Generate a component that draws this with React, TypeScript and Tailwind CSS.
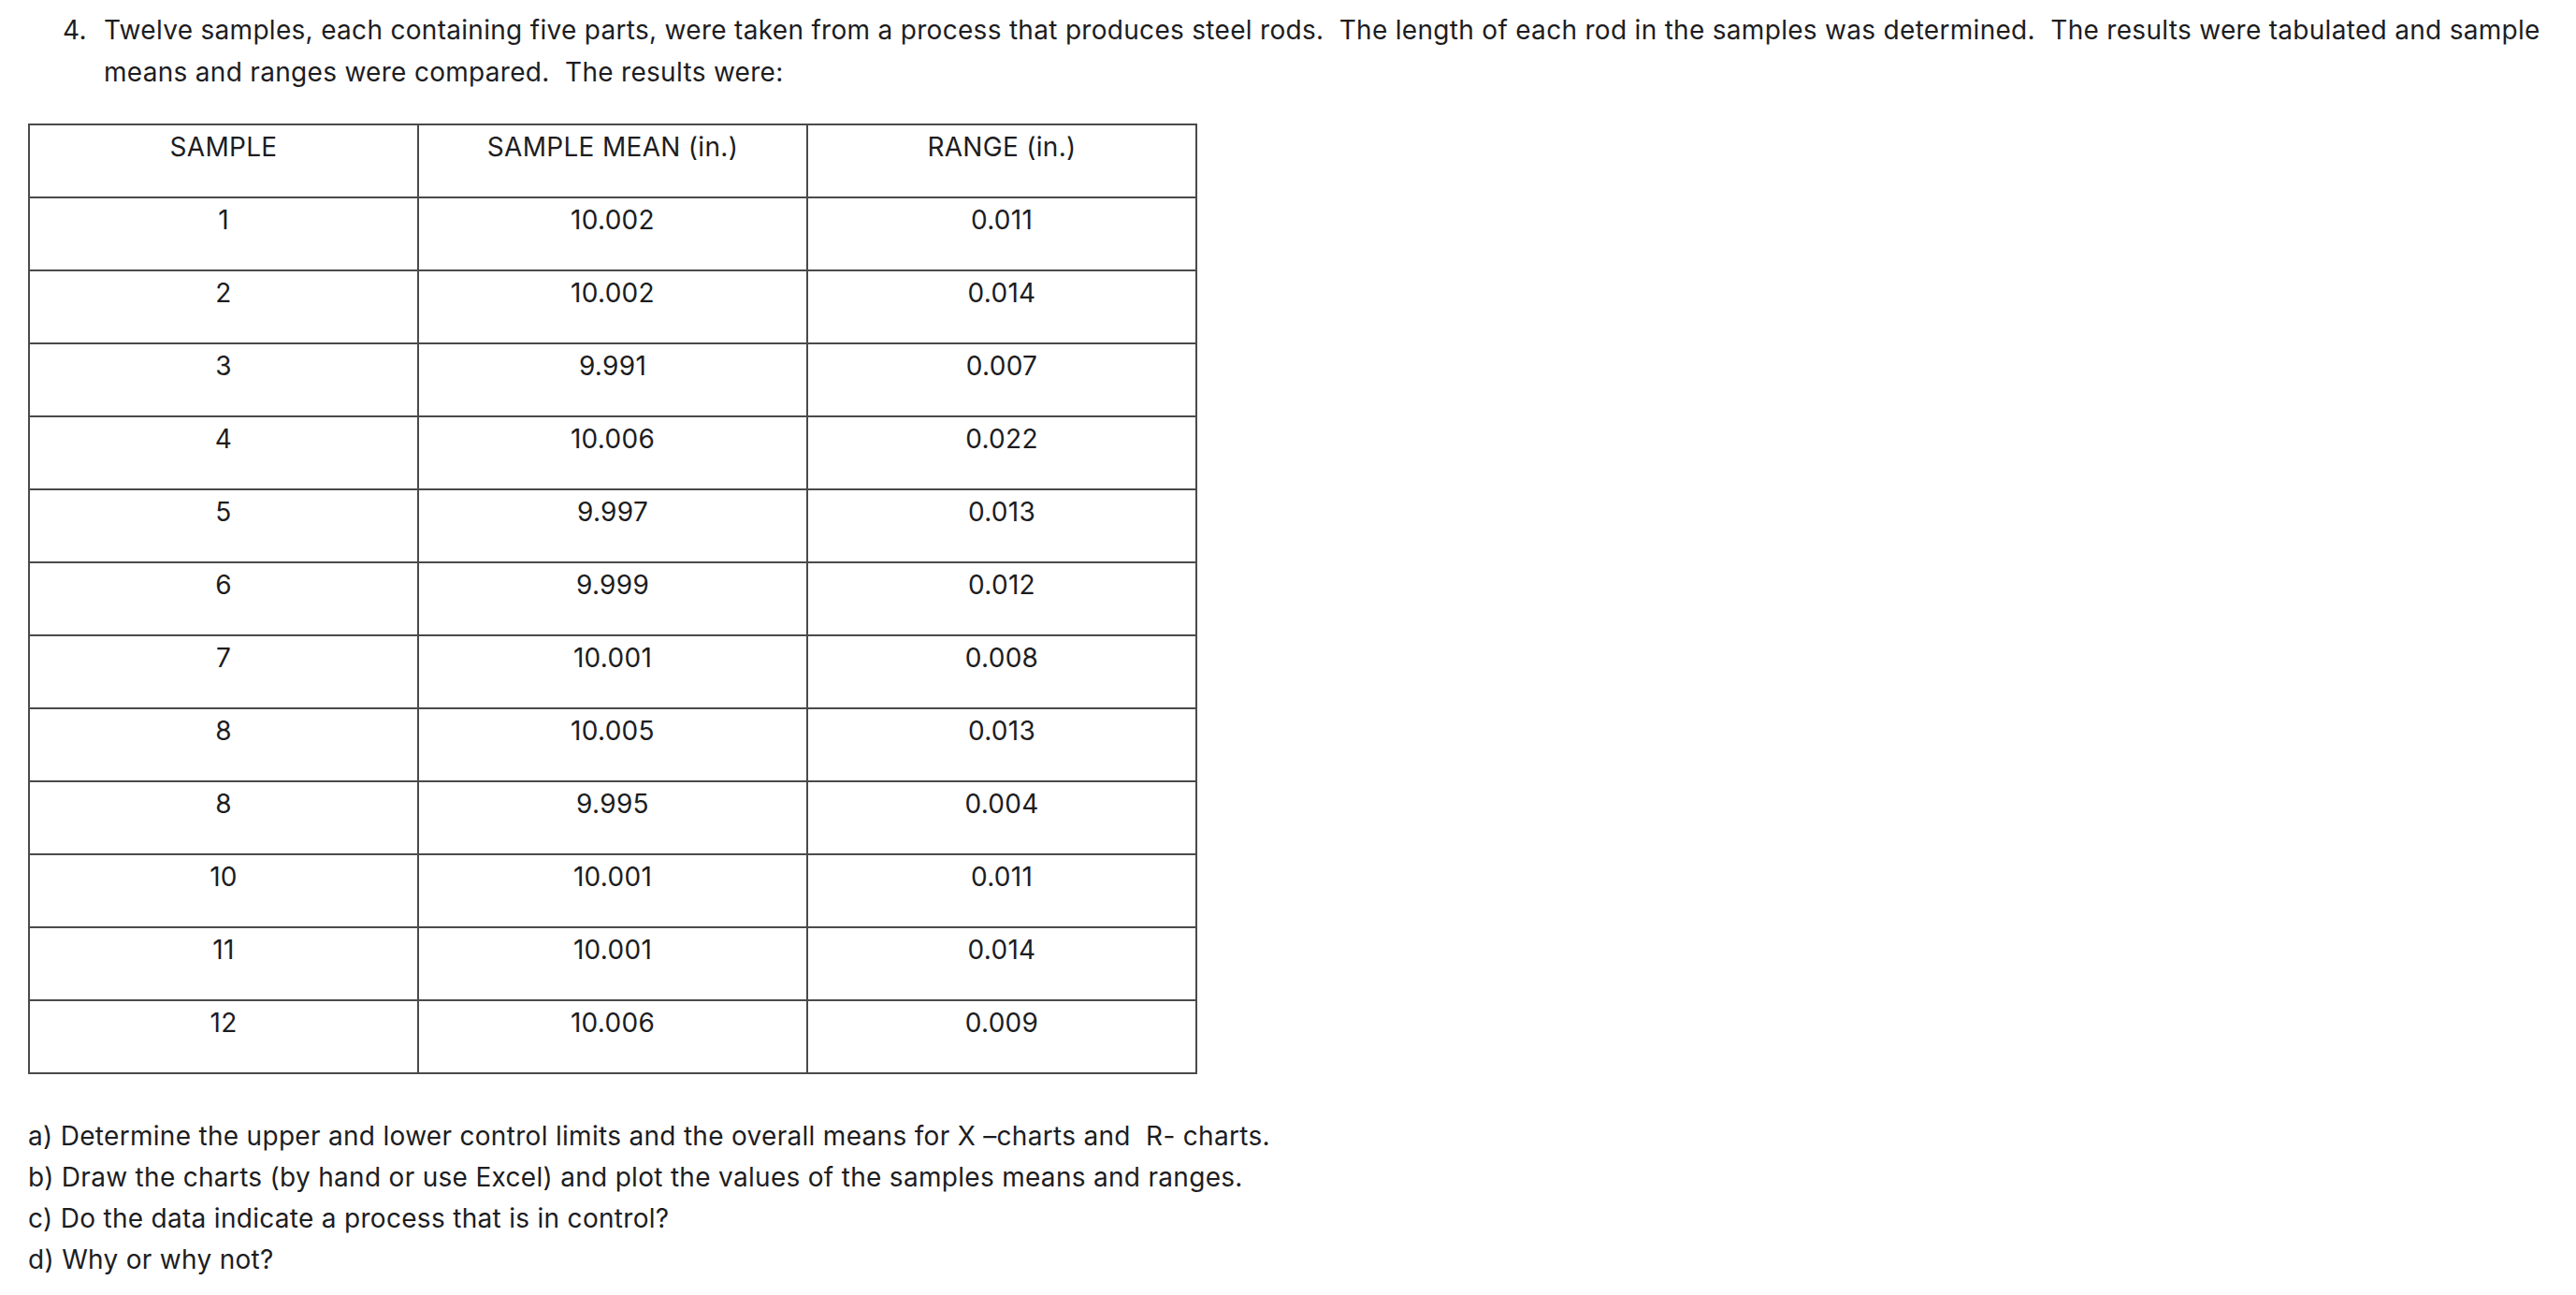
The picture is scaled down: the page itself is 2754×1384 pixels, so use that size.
const rows = [
  ['1', '10.002', '0.011'],
  ['2', '10.002', '0.014'],
  ['3', '9.991', '0.007'],
  ['4', '10.006', '0.022'],
  ['5', '9.997', '0.013'],
  ['6', '9.999', '0.012'],
  ['7', '10.001', '0.008'],
  ['8', '10.005', '0.013'],
  ['8', '9.995', '0.004'],
  ['10', '10.001', '0.011'],
  ['11', '10.001', '0.014'],
  ['12', '10.006', '0.009'],
];

const questions = [
  'a) Determine the upper and lower control limits and the overall means for X \u2013charts and \u00a0R- charts.',
  'b) Draw the charts (by hand or use Excel) and plot the values of the samples means and ranges.',
  'c) Do the data indicate a process that is in control?',
  'd) Why or why not?',
];

function Cell({ children }: { children: React.ReactNode }) {
  return (
    <td className="border-2 border-[#4a4a4a] w-[416px] h-[78px] align-top text-center pt-[1px] leading-[45px]">
      {children}
    </td>
  );
}

export default function App() {
  return (
    <div
      className="min-h-screen bg-white text-[#1d1d1f] text-[28px] tracking-[0.3px] leading-[45px] pl-[30px] pt-[10px]"
      style={{ fontFamily: 'Inter, "Noto Sans", sans-serif' }}
    >
      <div className="flex pl-[37px]">
        <span className="w-[44px] shrink-0">4.</span>
        <p className="whitespace-pre">
          {'Twelve samples, each containing five parts, were taken from a process that produces steel rods.  The length of each rod in the samples was determined.  The results were tabulated and sample'}
          <br />
          {'means and ranges were compared.  The results were:'}
        </p>
      </div>

      <table className="mt-[32px] border-collapse">
        <tbody>
          <tr>
            <Cell>SAMPLE</Cell>
            <Cell>SAMPLE MEAN (in.)</Cell>
            <Cell>RANGE (in.)</Cell>
          </tr>
          {rows.map((r, i) => (
            <tr key={i}>
              <Cell>{r[0]}</Cell>
              <Cell>{r[1]}</Cell>
              <Cell>{r[2]}</Cell>
            </tr>
          ))}
        </tbody>
      </table>

      <div className="mt-[44px] leading-[44px]">
        {questions.map((q) => (
          <p key={q}>{q}</p>
        ))}
      </div>
    </div>
  );
}
